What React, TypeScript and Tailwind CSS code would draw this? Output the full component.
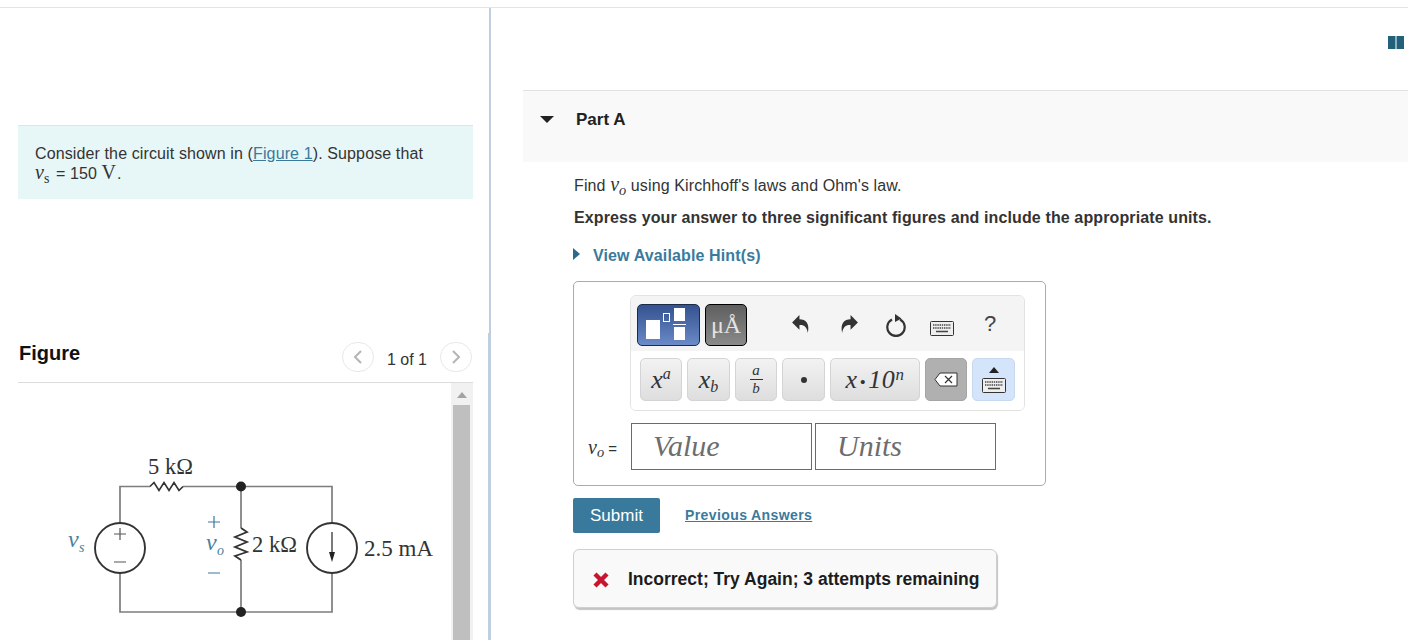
import React from "react";

const sans = "font-['Liberation_Sans',Arial,sans-serif]";
const serif = "font-['Liberation_Serif','Times_New_Roman',serif]";

const Vo = ({ cls = "" }: { cls?: string }) => (
  <span className={`${serif} italic tracking-normal ${cls}`}>
    v<sub className="text-[0.72em] leading-none">o</sub>
  </span>
);

const Circuit = () => (
  <svg width="433" height="257" viewBox="18 383 433 257" className="block">
    <g fill="none" stroke="#7d7d7d" strokeWidth="1.7">
      <path d="M120 523V486.5H150M183 486.5H332V523M332 573V612H120V573" />
      <path d="M241 487V528M241 560V612" />
    </g>
    <g fill="none" stroke="#333" strokeWidth="1.6">
      <path d="M150 486.5l4-4 5 8 5-8 5 8 5-8 5 8 4-4" />
      <path d="M241 528L247 532L235 537L247 542L235 547L247 552L235 556L241 560" strokeWidth="1.8" />
      <circle cx="120" cy="548" r="25" strokeWidth="1.9" />
      <circle cx="332" cy="548" r="25" strokeWidth="1.9" />
    </g>
    <path d="M114 534H126M120 528V540M114 562H126" stroke="#555" strokeWidth="1.2" />
    <path d="M332 532V553" stroke="#333" strokeWidth="1.3" />
    <path d="M329 552H335L332 562Z" fill="#222" />
    <circle cx="241" cy="486.5" r="5" fill="#222" />
    <circle cx="241" cy="612" r="5" fill="#222" />
    <path d="M208 522H220M214 516V528M208 573H220" stroke="#3a7a9c" strokeWidth="1.2" />
    <g fontFamily="'Liberation Serif',serif" fill="#333" fontSize="22.5">
      <text x="148" y="474">5 kΩ</text>
      <text x="252" y="552">2 kΩ</text>
      <text x="364" y="556" fontSize="23">2.5 mA</text>
    </g>
    <g fontFamily="'Liberation Serif',serif" fontStyle="italic" fill="#4a7f9c">
      <text x="68" y="547" fontSize="24">v</text>
      <text x="79" y="552" fontSize="14">s</text>
      <text x="206" y="550" fontSize="24">v</text>
      <text x="217" y="555" fontSize="14">o</text>
    </g>
  </svg>
);

const KeyboardIcon = ({ w = 24, h = 15 }: { w?: number; h?: number }) => (
  <svg width={w} height={h} viewBox="0 0 24 15">
    <rect x="0.5" y="0.5" width="23" height="14" rx="1" fill="#eee" stroke="#333" />
    <path d="M3 4H21M3 7H21" stroke="#444" strokeWidth="1.6" strokeDasharray="1.4 .8" />
    <path d="M6 10.5H18" stroke="#444" strokeWidth="1.6" />
  </svg>
);

const mathKey =
  "h-[43px] rounded-[5px] border border-[#d4d4d4] bg-gradient-to-b from-[#f2f2f2] to-[#dedede] flex items-center justify-center text-[#333]";

const Toolbar = () => (
  <div className="w-[395px] h-[116px] ml-[56px] border border-[#e2e2e2] rounded-[6px] overflow-hidden">
    <div className="h-[55px] pt-[2px] bg-[#f4f4f4] flex items-center pl-[6px]">
      <div className="w-[63px] h-[42px] rounded-[5px] border border-[#1d2a4a] bg-gradient-to-b from-[#34528f] to-[#6a8ac8] relative">
        <span className="absolute left-[8px] top-[15px] w-[14px] h-[19px] bg-white" />
        <span className="absolute left-[25px] top-[8px] w-[7px] h-[9px] border border-white" />
        <span className="absolute left-[36px] top-[3px] w-[11px] h-[13px] bg-white" />
        <span className="absolute left-[35px] top-[19px] w-[13px] h-[1px] bg-white" />
        <span className="absolute left-[36px] top-[22px] w-[11px] h-[13px] bg-white" />
      </div>
      <div className={`ml-[5px] w-[42px] h-[42px] rounded-[5px] border border-black bg-gradient-to-b from-[#5f5f5f] to-[#8a8a8a] flex items-center justify-center text-[#e4e4e4] text-[24px] ${serif}`}>
        μÅ
      </div>
      <svg className="ml-[44px]" width="19" height="21" viewBox="0 0 18 20">
        <path d="M1 8L8 1V5C14 5 18 9 16 18C15 12 12 10 8 10.5V15Z" fill="#333" />
      </svg>
      <svg className="ml-[30px]" width="19" height="21" viewBox="0 0 18 20">
        <path d="M17 8L10 1V5C4 5 0 9 2 18C3 12 6 10 10 10.5V15Z" fill="#333" />
      </svg>
      <svg className="ml-[26px]" width="22" height="24" viewBox="0 0 22 24">
        <path d="M7 6.5A8.7 8.7 0 1 0 15 6.5" fill="none" stroke="#333" strokeWidth="2.2" />
        <path d="M10 1L16.5 5.5L10 9Z" fill="#333" />
      </svg>
      <span className="ml-[23px] mt-[7px]"><KeyboardIcon /></span>
      <span className={`ml-[30px] -mt-[2px] text-[22px] text-[#444] ${sans}`}>?</span>
    </div>
    <div className="h-[59px] bg-white flex items-start pt-[7px] pl-[9px]">
      <div className={`${mathKey} w-[42px] ${serif} italic text-[26px]`}>
        <span>x<sup className="text-[16px] leading-none -top-[0.55em]">a</sup></span>
      </div>
      <div className={`${mathKey} ml-[5px] w-[43px] ${serif} italic text-[26px]`}>
        <span>x<sub className="text-[16px] leading-none">b</sub></span>
      </div>
      <div className={`${mathKey} ml-[5px] w-[42px] ${serif} italic text-[15px] flex-col leading-none`}>
        <span>a</span>
        <span className="w-[13px] h-[1px] bg-[#333] my-[1px]" />
        <span>b</span>
      </div>
      <div className={`${mathKey} ml-[5px] w-[43px]`}>
        <span className="w-[6px] h-[6px] rounded-full bg-[#333]" />
      </div>
      <div className={`${mathKey} ml-[5px] w-[90px] ${serif} italic text-[26px] tracking-[0.6px]`}>
        <span>x<span className="not-italic mx-[2px] text-[17px]">•</span>10<sup className="text-[17px] leading-none -top-[0.5em]">n</sup></span>
      </div>
      <div className="ml-[5px] w-[42px] h-[43px] rounded-[5px] bg-[#b0b0b0] border border-[#a5a5a5] flex items-center justify-center">
        <svg width="24" height="15" viewBox="0 0 24 15">
          <path d="M6 1H23V14H6L1 7.5Z" fill="#fff" stroke="#333" />
          <path d="M11 4L18 11M18 4L11 11" stroke="#333" strokeWidth="1.2" />
        </svg>
      </div>
      <div className="ml-[5px] w-[43px] h-[43px] rounded-[5px] bg-[#d3e4fb] border border-[#c8d9ef] flex flex-col items-center justify-center gap-[5px]">
        <span className="w-0 h-0 border-x-[5px] border-x-transparent border-b-[6px] border-b-[#222]" />
        <KeyboardIcon w={24} h={15} />
      </div>
    </div>
  </div>
);

const inputBox =
  "w-[181px] h-[47px] border border-[#3a7a9c] pl-[21px] pb-[2px] flex items-center text-[30px] italic text-[#6d6d6d]";

export default function App() {
  return (
    <div className={`w-[1408px] h-[640px] overflow-hidden bg-white flex flex-col ${sans}`}>
      <div className="h-[7px] shrink-0 border-b border-[#e4e4e4] box-content" />
      <div className="flex flex-1 min-h-0">
        {/* left column */}
        <div className="w-[489px] shrink-0 pl-[18px] pr-[16px] pt-[117px]">
          <div className="h-[74px] border-t border-[#dfe5e5] bg-[#e7f6f6] pl-[17px] pt-[19px] text-[16px] leading-[18px] tracking-[0.12px] text-[#333]">
            <div>
              Consider the circuit shown in (<span className="text-[#3a7a9c] underline">Figure 1</span>). Suppose that
            </div>
            <div>
              <span className={`${serif} italic text-[20px] leading-[18px] tracking-normal mr-[2px]`}>
                v<sub className="not-italic text-[14px] leading-none">s</sub>
              </span>{" "}
              = 150 <span className={`${serif} text-[20px] leading-[18px] tracking-[1px]`}>V</span>.
            </div>
          </div>
          <div className="h-[184px] flex items-end">
            <div className="w-full h-[42px] pt-[1px] border-b border-[#dcdcdc] flex items-start justify-between">
              <span className="ml-[1px] text-[20px] font-bold leading-[23px] text-[#111]">Figure</span>
              <div className="flex items-center pr-[1px] text-[16px] text-[#333]">
                <span className="w-[32px] h-[30px] rounded-full border border-[#e8e8e8] flex items-center justify-center">
                  <svg width="10" height="14" viewBox="0 0 10 14"><path d="M8 1L2 7L8 13" fill="none" stroke="#b5b5b5" strokeWidth="2" /></svg>
                </span>
                <span className="ml-[13px] mr-[13px] mt-[6px]">1 of 1</span>
                <span className="w-[32px] h-[30px] rounded-full border border-[#e8e8e8] flex items-center justify-center">
                  <svg width="10" height="14" viewBox="0 0 10 14"><path d="M2 1L8 7L2 13" fill="none" stroke="#b5b5b5" strokeWidth="2" /></svg>
                </span>
              </div>
            </div>
          </div>
          <div className="flex">
            <Circuit />
            <div className="w-[22px] h-[300px] bg-[#f1f1f1] flex flex-col items-center pr-[1px]">
              <span className="mt-[9px] w-0 h-0 border-x-[5px] border-x-transparent border-b-[6px] border-b-[#a3a3a3]" />
              <span className="mt-[7px] w-[17px] h-[300px] bg-[#bfbfbf]" />
            </div>
          </div>
        </div>
        {/* divider */}
        <div className="w-[2px] shrink-0 bg-[#c0cfe0] relative">
          <span className="absolute -left-[1px] top-[325px] bottom-0 w-[1px] bg-[#c0cfe0]" />
        </div>
        {/* right column */}
        <div className="flex-1 min-w-0 pl-[32px] pt-[82px] relative">
          <svg className="absolute right-[4px] top-[28px]" width="16" height="13" viewBox="0 0 16 13">
            <rect x="0" y="0" width="16" height="13" fill="#8fb2c0" />
            <rect x="0" y="0" width="7" height="13" fill="#23617a" />
            <rect x="9" y="0" width="7" height="13" fill="#23617a" />
          </svg>
          <div className="h-[72px] border-t border-[#e2e2e2] bg-[#f9f9f9] flex items-start pt-[19px]">
            <span className="ml-[17px] mt-[6px] w-0 h-0 border-x-[7px] border-x-transparent border-t-[7px] border-t-[#222]" />
            <span className="ml-[22px] text-[17px] leading-[20px] font-bold text-[#222]">Part A</span>
          </div>
          <div className="pl-[50px]">
            <div className="mt-[12px] ml-[1px] h-[20px] text-[16px] leading-[20px] tracking-[0.12px] text-[#333]">
              Find <Vo cls="text-[20px]" /> using Kirchhoff's laws and Ohm's law.
            </div>
            <div className="mt-[14px] ml-[1px] text-[16px] leading-[20px] tracking-[0.12px] font-bold text-[#333]">
              Express your answer to three significant figures and include the appropriate units.
            </div>
            <div className="mt-[18px] h-[20px] flex items-center text-[16px] tracking-[0.13px] font-bold text-[#3a7a9c]">
              <span className="w-0 h-0 mb-[4px] border-y-[6px] border-y-transparent border-l-[7px] border-l-[#2d6a8a]" />
              <span className="ml-[13px]">View Available Hint(s)</span>
            </div>
            <div className="mt-[15px] w-[473px] h-[205px] border border-[#ababab] rounded-[5px] pt-[13px]">
              <Toolbar />
              <div className="mt-[12px] flex items-center">
                <span className="ml-[14px] w-[43px] text-[15px] text-[#333]">
                  <Vo cls="text-[20px]" /> =
                </span>
                <div className={`${inputBox} ${serif}`}>Value</div>
                <div className={`${inputBox} ${serif} ml-[3px]`}>Units</div>
              </div>
            </div>
            <div className="mt-[12px] flex items-center">
              <span className="w-[87px] h-[35px] rounded-[2px] bg-[#38799c] text-white text-[17px] flex items-center justify-center">Submit</span>
              <span className="ml-[25px] text-[14px] tracking-[0.4px] font-bold text-[#3a7a9c] underline">Previous Answers</span>
            </div>
            <div className="mt-[16px] w-[424px] h-[59px] rounded-[6px] border border-[#cfcfcf] bg-[#f9f9f9] shadow-[1px_2px_1px_#c4c4c4] flex items-center pl-[18px] pt-[2px]">
              <svg width="18" height="18" viewBox="0 0 18 18">
                <path d="M3 3L15 15M15 3L3 15" stroke="#c8152f" strokeWidth="4.4" />
              </svg>
              <span className="ml-[18px] text-[17.5px] font-bold text-[#1c1c1c]">Incorrect; Try Again; 3 attempts remaining</span>
            </div>
          </div>
        </div>
      </div>
    </div>
  );
}
